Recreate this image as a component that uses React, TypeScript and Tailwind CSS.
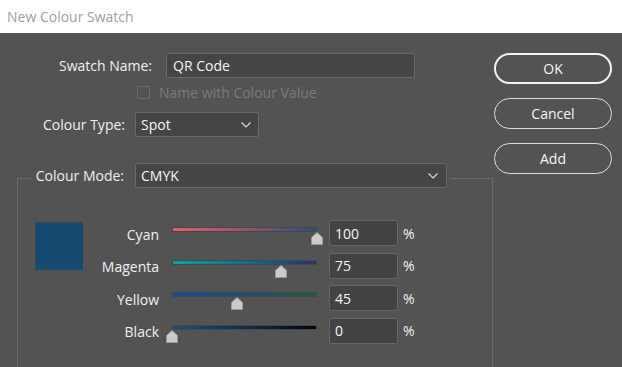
import React from "react";

const font = { fontFamily: '"Segoe UI", "Open Sans", sans-serif' };

interface Channel {
  name: string;
  value: number;
  track: string;
}

const channels: Channel[] = [
  {
    name: "Cyan",
    value: 100,
    track: "bg-[linear-gradient(to_right,#e65e6c,#955372_50%,#2c4f74)]",
  },
  {
    name: "Magenta",
    value: 75,
    track: "bg-[linear-gradient(to_right,#07a3a5,#0b6d8a_55%,#30306b)]",
  },
  {
    name: "Yellow",
    value: 45,
    track: "bg-[linear-gradient(to_right,#0a4fa6,#1a4f78_50%,#23573f)]",
  },
  {
    name: "Black",
    value: 0,
    track: "bg-[linear-gradient(to_right,#1a507b,#0d2740_60%,#020409)]",
  },
];

const Chevron = () => (
  <svg width="10" height="6" viewBox="0 0 10 6" className="shrink-0">
    <polyline points="0.5,0.5 5,5 9.5,0.5" fill="none" stroke="#d8d8d8" strokeWidth="1.2" />
  </svg>
);

const Thumb = () => (
  <svg width="12" height="13" viewBox="0 0 12 13">
    <path d="M6 0.5 L11.5 5.5 V12.5 H0.5 V5.5 Z" fill="#cbcbcb" stroke="#9a9a9a" strokeWidth="1" />
  </svg>
);

const SliderRow = ({ channel }: { channel: Channel }) => (
  <div className="flex items-center h-[26px]">
    <div className="w-[76px] text-right text-[14px] text-[#f0f0f0] pt-[2px] whitespace-nowrap">
      {channel.name}
    </div>
    <div className="relative ml-[13px] w-[145px] h-[26px]">
      <div
        className={`absolute left-0 top-[7px] w-[145px] h-[5px] border border-[#474747] ${channel.track}`}
      />
      <div
        className="absolute top-[12px] leading-none"
        style={{ left: `${(channel.value / 100) * 145 - 6}px` }}
      >
        <Thumb />
      </div>
    </div>
    <div className="ml-[12px] w-[69px] h-[26px] rounded-[2px] border border-[#666666] bg-[#434343] flex items-center pl-[5px] text-[14px] text-[#f5f5f5]">
      {channel.value}
    </div>
    <span className="ml-[5px] text-[14px] text-[#f0f0f0]">%</span>
  </div>
);

const DialogButton = ({ label, primary }: { label: string; primary?: boolean }) => (
  <button
    className={`w-[118px] h-[31px] rounded-full text-[14px] text-[#f5f5f5] flex items-center justify-center ${
      primary ? "border-2 border-[#f2f2f2]" : "border border-[#dcdcdc]"
    }`}
  >
    {label}
  </button>
);

export default function App() {
  return (
    <div style={font} className="w-[622px] h-[367px] overflow-hidden bg-[#535353] flex flex-col whitespace-nowrap">
      <div className="h-[33px] shrink-0 bg-white flex items-center pl-[7px] text-[14px] text-[#a0a0a0]">
        New Colour Swatch
      </div>

      <div className="flex flex-1">
        {/* form column */}
        <div className="w-[493px] shrink-0 flex flex-col">
          <div className="flex items-center mt-[20px]">
            <div className="w-[152px] text-right text-[14px] text-[#f0f0f0]">Swatch Name:</div>
            <div className="ml-[14px] w-[249px] h-[25px] rounded-[2px] border border-[#696969] bg-[#454545] flex items-center pl-[6px] text-[14px] text-[#f5f5f5]">
              QR Code
            </div>
          </div>

          <div className="flex items-center mt-[8px] ml-[137px] h-[13px]">
            <div className="w-[13px] h-[13px] border border-[#6c6c6c] rounded-[1px]" />
            <span className="ml-[9px] text-[14px] text-[#7b7b7b] leading-none">Name with Colour Value</span>
          </div>

          <div className="flex items-center mt-[13px]">
            <div className="w-[125px] text-right text-[14px] text-[#f0f0f0]">Colour Type:</div>
            <div className="ml-[10px] w-[124px] h-[25px] rounded-[2px] border border-[#696969] bg-[#454545] flex items-center justify-between pl-[5px] pr-[7px] text-[14px] text-[#f5f5f5]">
              <span>Spot</span>
              <Chevron />
            </div>
          </div>

          <fieldset className="mt-[26px] ml-[17px] w-[476px] h-[260px] border border-[#6a6a6a]">
            <legend className="ml-[13px] pl-[3px] pr-[3px] pb-[5px]">
              <div className="flex items-center">
                <div className="w-[90px] text-right text-[14px] text-[#f0f0f0]">Colour Mode:</div>
                <div className="ml-[11px] w-[312px] h-[25px] rounded-[2px] border border-[#696969] bg-[#454545] flex items-center justify-between pl-[5px] pr-[8px] text-[14px] text-[#f5f5f5]">
                  <span>CMYK</span>
                  <Chevron />
                </div>
              </div>
            </legend>

            <div className="flex items-start mt-[27px]">
              <div className="ml-[17px] mt-[2px] w-[48px] h-[48px] bg-[#164a70] border-t border-l border-[#3a4450]" />
              <div className="flex flex-col gap-[6.5px]">
                {channels.map((c) => (
                  <SliderRow key={c.name} channel={c} />
                ))}
              </div>
            </div>
          </fieldset>
        </div>

        {/* buttons */}
        <div className="ml-[1px] mt-[20px] flex flex-col gap-[14px]">
          <DialogButton label="OK" primary />
          <DialogButton label="Cancel" />
          <DialogButton label="Add" />
        </div>
      </div>
    </div>
  );
}
